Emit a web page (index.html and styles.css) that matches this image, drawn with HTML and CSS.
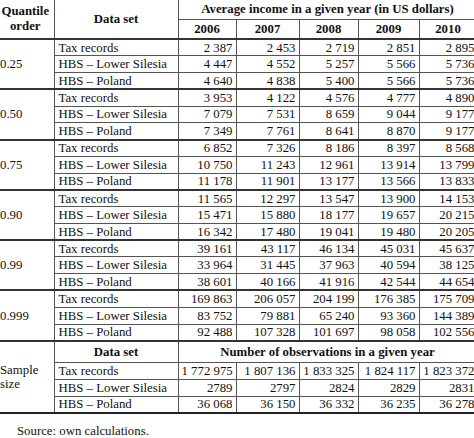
FILE: index.html
```html
<!DOCTYPE html>
<html>
<head>
<meta charset="utf-8">
<link rel="stylesheet" href="styles.css">
</head>
<body>
<div class="page">
<table class="data">
  <colgroup>
    <col class="c-q"><col class="c-ds"><col class="c-y1"><col class="c-y2"><col class="c-y3"><col class="c-y4"><col class="c-y5">
  </colgroup>
  <thead>
    <tr class="h1">
      <th rowspan="2" class="qh">Quantile<br>order</th>
      <th rowspan="2">Data set</th>
      <th colspan="5" class="span">Average income in a given year (in US dollars)</th>
    </tr>
    <tr class="h2">
      <th>2006</th><th>2007</th><th>2008</th><th>2009</th><th>2010</th>
    </tr>
  </thead>
  <tbody class="grp">
    <tr><td rowspan="3" class="q">0.25</td><td class="ds">Tax records</td><td>2 387</td><td>2 453</td><td>2 719</td><td>2 851</td><td>2 895</td></tr>
    <tr><td class="ds">HBS – Lower Silesia</td><td>4 447</td><td>4 552</td><td>5 257</td><td>5 566</td><td>5 736</td></tr>
    <tr><td class="ds">HBS – Poland</td><td>4 640</td><td>4 838</td><td>5 400</td><td>5 566</td><td>5 736</td></tr>
  </tbody>
  <tbody class="grp">
    <tr><td rowspan="3" class="q">0.50</td><td class="ds">Tax records</td><td>3 953</td><td>4 122</td><td>4 576</td><td>4 777</td><td>4 890</td></tr>
    <tr><td class="ds">HBS – Lower Silesia</td><td>7 079</td><td>7 531</td><td>8 659</td><td>9 044</td><td>9 177</td></tr>
    <tr><td class="ds">HBS – Poland</td><td>7 349</td><td>7 761</td><td>8 641</td><td>8 870</td><td>9 177</td></tr>
  </tbody>
  <tbody class="grp">
    <tr><td rowspan="3" class="q">0.75</td><td class="ds">Tax records</td><td>6 852</td><td>7 326</td><td>8 186</td><td>8 397</td><td>8 568</td></tr>
    <tr><td class="ds">HBS – Lower Silesia</td><td>10 750</td><td>11 243</td><td>12 961</td><td>13 914</td><td>13 799</td></tr>
    <tr><td class="ds">HBS – Poland</td><td>11 178</td><td>11 901</td><td>13 177</td><td>13 566</td><td>13 833</td></tr>
  </tbody>
  <tbody class="grp">
    <tr><td rowspan="3" class="q">0.90</td><td class="ds">Tax records</td><td>11 565</td><td>12 297</td><td>13 547</td><td>13 900</td><td>14 153</td></tr>
    <tr><td class="ds">HBS – Lower Silesia</td><td>15 471</td><td>15 880</td><td>18 177</td><td>19 657</td><td>20 215</td></tr>
    <tr><td class="ds">HBS – Poland</td><td>16 342</td><td>17 480</td><td>19 041</td><td>19 480</td><td>20 205</td></tr>
  </tbody>
  <tbody class="grp">
    <tr><td rowspan="3" class="q">0.99</td><td class="ds">Tax records</td><td>39 161</td><td>43 117</td><td>46 134</td><td>45 031</td><td>45 637</td></tr>
    <tr><td class="ds">HBS – Lower Silesia</td><td>33 964</td><td>31 445</td><td>37 963</td><td>40 594</td><td>38 125</td></tr>
    <tr><td class="ds">HBS – Poland</td><td>38 601</td><td>40 166</td><td>41 916</td><td>42 544</td><td>44 654</td></tr>
  </tbody>
  <tbody class="grp">
    <tr><td rowspan="3" class="q">0.999</td><td class="ds">Tax records</td><td>169 863</td><td>206 057</td><td>204 199</td><td>176 385</td><td>175 709</td></tr>
    <tr><td class="ds">HBS – Lower Silesia</td><td>83 752</td><td>79 881</td><td>65 240</td><td>93 360</td><td>144 389</td></tr>
    <tr><td class="ds">HBS – Poland</td><td>92 488</td><td>107 328</td><td>101 697</td><td>98 058</td><td>102 556</td></tr>
  </tbody>
  <tbody class="grp last">
    <tr class="sh"><td rowspan="4" class="q">Sample<br>size</td><th>Data set</th><th colspan="5" class="span">Number of observations in a given year</th></tr>
    <tr><td class="ds">Tax records</td><td>1 772 975</td><td>1 807 136</td><td>1 833 325</td><td>1 824 117</td><td>1 823 372</td></tr>
    <tr><td class="ds">HBS – Lower Silesia</td><td>2789</td><td>2797</td><td>2824</td><td>2829</td><td>2831</td></tr>
    <tr><td class="ds">HBS – Poland</td><td>36 068</td><td>36 150</td><td>36 332</td><td>36 235</td><td>36 278</td></tr>
  </tbody>
</table>
<p class="source">Source: own calculations.</p>
</div>
</body>
</html>
```

FILE: styles.css
```css
html, body {
  margin: 0;
  padding: 0;
  background: #ffffff;
}
body {
  font-family: "Liberation Serif", "Times New Roman", serif;
  color: #111111;
  overflow: hidden;
}
.page {
  width: 474px;
  height: 438px;
  overflow: hidden;
}
.data {
  border-collapse: collapse;
  table-layout: fixed;
  width: 481px;
  margin-left: -4px;
  font-size: 12.8px;
  line-height: 14px;
}
.c-q { width: 58px; }
.c-ds { width: 124px; }
.c-y1 { width: 58px; }
.c-y2 { width: 63px; }
.c-y3 { width: 59px; }
.c-y4 { width: 61px; }
.c-y5 { width: 58px; }

.data th,
.data td {
  border: 1px solid #555555;
  padding: 0 3px;
  white-space: nowrap;
  overflow: hidden;
}
.data td:last-child {
  padding-right: 2px;
}
.data th {
  font-weight: bold;
  text-align: center;
  vertical-align: middle;
}
.data td {
  text-align: right;
  vertical-align: middle;
}
.data thead th {
  border-top: none;
}
.data .qh {
  border-left: none;
  padding-left: 4px;
  line-height: 15px;
}
.h1 { height: 19px; }
.h2 { height: 20px; }
.data tbody tr { height: 16.78px; }
.data tbody tr.sh { height: 22px; }

.data td.ds {
  text-align: left;
  padding-left: 4px;
}
.data td.q {
  text-align: left;
  border-left: none;
  padding-left: 4px;
}
.data tbody.grp tr:first-child td,
.data tbody.grp tr:first-child th {
  border-top: 2px solid #333333;
}
.data tbody.last tr:last-child td,
.data tbody.last td.q {
  border-bottom: 2px solid #222222;
}
.source {
  margin: 10px 0 0 17px;
  font-size: 12.8px;
  line-height: 14px;
}
```
